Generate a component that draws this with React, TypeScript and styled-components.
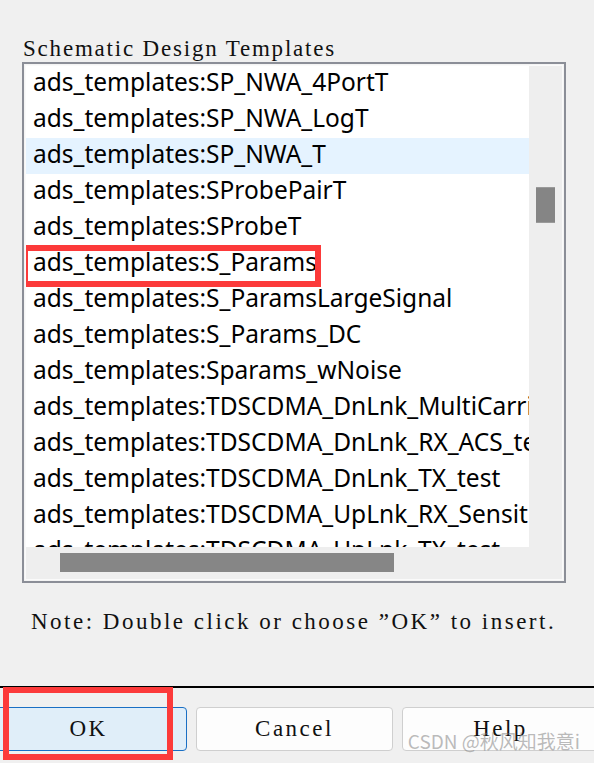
import React from "react";
import styled, { createGlobalStyle } from "styled-components";

const Global = createGlobalStyle`
  html, body { margin: 0; padding: 0; background: #f0f0f0; }
  body { width: 594px; height: 763px; overflow: hidden; }
`;

const SERIF = `"Liberation Serif", "Times New Roman", serif`;
const SANS = `"Noto Sans", "Open Sans", sans-serif`;

const Page = styled.div`
  position: relative;
  width: 594px;
  height: 763px;
  display: flex;
  flex-direction: column;
  background: #f0f0f0;
  overflow: hidden;
`;

const Label = styled.div`
  font-family: ${SERIF};
  font-size: 23px;
  letter-spacing: 1.8px;
  line-height: 22px;
  color: #111;
  white-space: nowrap;
  margin: 38px 0 0 23px;
  height: 24px;
`;

const ListBox = styled.div`
  margin-left: 22px;
  width: 544px;
  height: 521px;
  box-sizing: border-box;
  border: 2px solid #8b8e97;
  background: #f4f4f4;
  padding: 1px;
`;

const ListInner = styled.div`
  box-sizing: border-box;
  width: 100%;
  height: 100%;
  border: 1px solid #fafafa;
  display: grid;
  grid-template-columns: 503px 1fr;
  grid-template-rows: 481px 1fr;
  background: #efefef;
`;

const Viewport = styled.div`
  background: #ffffff;
  overflow: hidden;
  display: flex;
  flex-direction: column;
`;

const Row = styled.div<{ $selected?: boolean }>`
  position: relative;
  flex: 0 0 36px;
  height: 36px;
  box-sizing: border-box;
  padding-left: 7px;
  white-space: nowrap;
  font-family: ${SANS};
  font-size: 24.5px;
  line-height: 31px;
  color: #000;
  background: ${(p) => (p.$selected ? "#e5f3ff" : "transparent")};
`;

const Mark = styled.span`
  position: absolute;
  left: -4px;
  top: -1px;
  width: 299px;
  height: 42px;
  box-sizing: border-box;
  border: 6px solid #fc3a3a;
  pointer-events: none;
`;

const VTrack = styled.div`
  background: #eeeeee;
  position: relative;
`;

const VThumb = styled.div`
  position: absolute;
  left: 7px;
  top: 121px;
  width: 19px;
  height: 36px;
  background: #858585;
  border-top: 1px solid #9a9a9a;
  border-bottom: 1px solid #9a9a9a;
  box-sizing: border-box;
`;

const HTrack = styled.div`
  background: #eeeeee;
  position: relative;
`;

const HThumb = styled.div`
  position: absolute;
  left: 34px;
  top: 6px;
  width: 334px;
  height: 19px;
  background: #868686;
`;

const Corner = styled.div`
  background: #eeeeee;
`;

const Note = styled.div`
  font-family: ${SERIF};
  font-size: 23px;
  letter-spacing: 2.5px;
  line-height: 22px;
  color: #111;
  white-space: nowrap;
  margin: 28px 0 0 31px;
`;

const Divider = styled.div`
  margin-top: 53px;
  height: 2px;
  background: #000;
`;

const Footer = styled.div`
  position: relative;
  flex: 1;
  display: flex;
  gap: 9px;
  padding-top: 19px;
  margin-left: -10px;
`;

const Button = styled.div<{ $primary?: boolean }>`
  flex: 0 0 197px;
  height: 44px;
  box-sizing: border-box;
  border-radius: 4px;
  border: 1px solid ${(p) => (p.$primary ? "#1a6fc4" : "#cfcfcf")};
  background: ${(p) => (p.$primary ? "#e0eef9" : "#fdfdfd")};
  display: flex;
  align-items: center;
  justify-content: center;
  font-family: ${SERIF};
  font-size: 23px;
  letter-spacing: 2.5px;
  color: #111;
`;

const OkMark = styled.div`
  position: absolute;
  left: 13px;
  top: -1px;
  width: 170px;
  height: 73px;
  box-sizing: border-box;
  border: 6px solid #fc3a3a;
  pointer-events: none;
`;

const Watermark = styled.div`
  position: absolute;
  right: 14px;
  bottom: 9px;
  font-family: "Noto Sans CJK SC", ${SANS};
  font-size: 19px;
  color: rgba(120, 120, 120, 0.5);
  white-space: nowrap;
  pointer-events: none;
`;

const items = [
  "ads_templates:SP_NWA_4PortT",
  "ads_templates:SP_NWA_LogT",
  "ads_templates:SP_NWA_T",
  "ads_templates:SProbePairT",
  "ads_templates:SProbeT",
  "ads_templates:S_Params",
  "ads_templates:S_ParamsLargeSignal",
  "ads_templates:S_Params_DC",
  "ads_templates:Sparams_wNoise",
  "ads_templates:TDSCDMA_DnLnk_MultiCarrier_test",
  "ads_templates:TDSCDMA_DnLnk_RX_ACS_test",
  "ads_templates:TDSCDMA_DnLnk_TX_test",
  "ads_templates:TDSCDMA_UpLnk_RX_Sensitivity",
  "ads_templates:TDSCDMA_UpLnk_TX_test",
];

export default function App() {
  return (
    <Page>
      <Global />
      <Label>Schematic Design Templates</Label>
      <ListBox>
        <ListInner>
          <Viewport>
            {items.map((t, i) => (
              <Row key={t} $selected={i === 2}>
                {t}
                {i === 5 && <Mark />}
              </Row>
            ))}
          </Viewport>
          <VTrack>
            <VThumb />
          </VTrack>
          <HTrack>
            <HThumb />
          </HTrack>
          <Corner />
        </ListInner>
      </ListBox>
      <Note>Note: Double click or choose ”OK” to insert.</Note>
      <Divider />
      <Footer>
        <Button $primary>OK</Button>
        <Button>Cancel</Button>
        <Button>Help</Button>
        <OkMark />
      </Footer>
      <Watermark>CSDN @秋风知我意i</Watermark>
    </Page>
  );
}
